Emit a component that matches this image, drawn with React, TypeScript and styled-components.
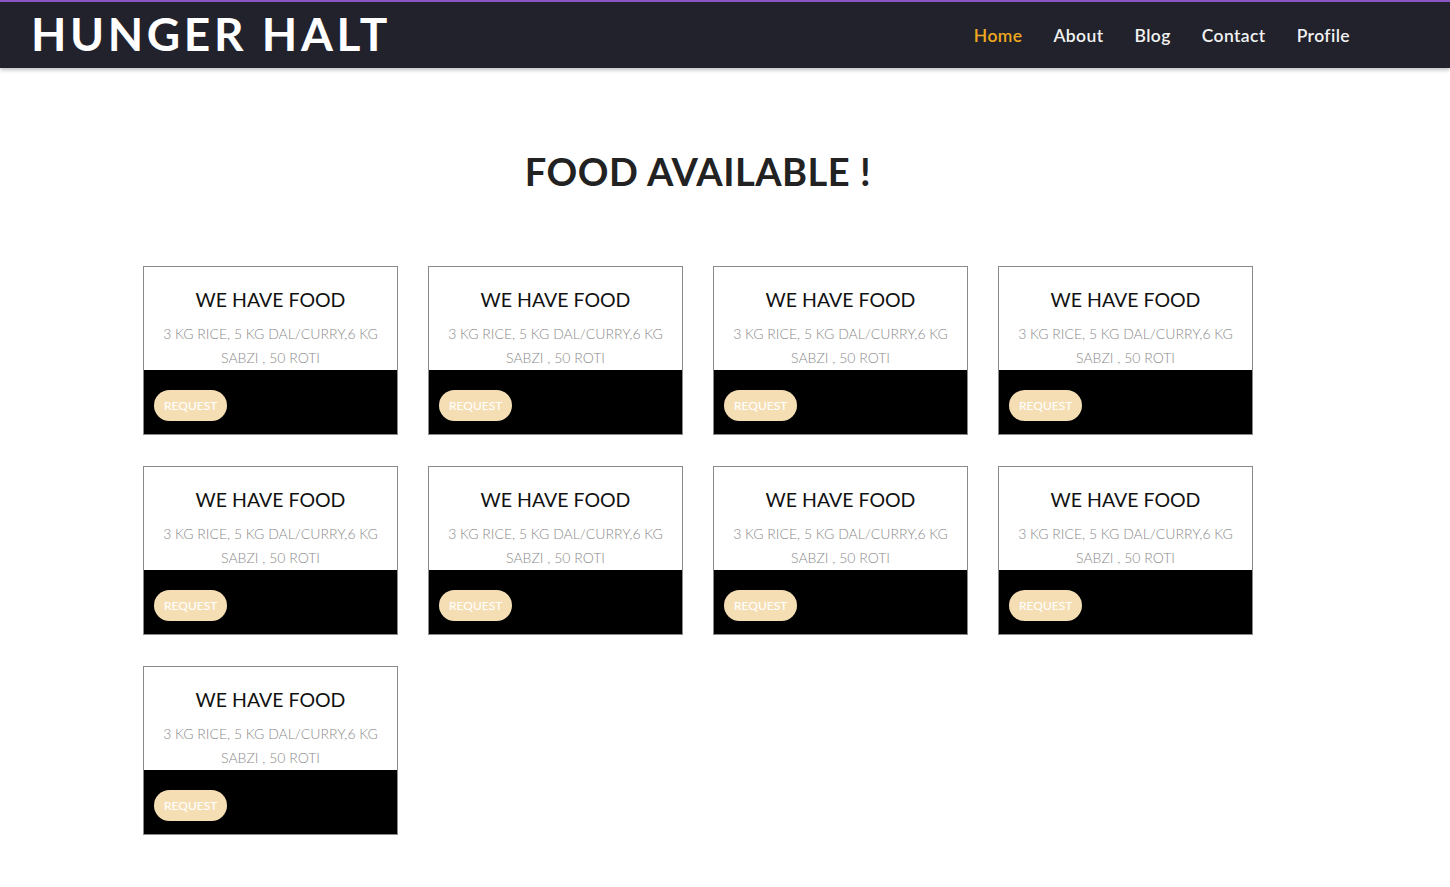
import React from "react";
import styled, { createGlobalStyle } from "styled-components";

const GlobalStyle = createGlobalStyle`
  body {
    margin: 0;
    background: #fff;
    font-family: "Lato", "Noto Sans", sans-serif;
  }
`;

const NavBar = styled.nav`
  height: 66px;
  background: #22222c;
  border-top: 2px solid #8a55c4;
  display: flex;
  align-items: center;
  justify-content: space-between;
  padding: 0 100px 0 31px;
  box-shadow: 0 2px 4px rgba(0, 0, 0, 0.25);
`;

const Logo = styled.div`
  color: #fff;
  font-size: 46px;
  font-weight: 700;
  letter-spacing: 3.6px;
  line-height: 1;
  margin-top: -2px;
`;

const Links = styled.ul`
  display: flex;
  gap: 31px;
  list-style: none;
  margin: 0;
  padding: 0;
`;

const NavLink = styled.li<{ $active?: boolean }>`
  color: ${(p) => (p.$active ? "#f0a920" : "#f2f2f2")};
  font-size: 17.5px;
  font-weight: 600;
  letter-spacing: 0.4px;
`;

const Main = styled.main`
  width: 1110px;
  margin: 0 auto;
  padding: 80px 54px 40px 0;
`;

const Title = styled.h1`
  margin: 0 0 72px;
  text-align: center;
  font-size: 38px;
  line-height: 46px;
  font-weight: 700;
  color: #222;
  letter-spacing: 0.5px;
`;

const Grid = styled.div`
  display: grid;
  grid-template-columns: repeat(4, 255px);
  column-gap: 30px;
  row-gap: 31px;
`;

const Card = styled.div`
  border: 1px solid #8a8a8a;
  display: flex;
  flex-direction: column;
  height: 169px;
  box-sizing: border-box;
`;

const CardTop = styled.div`
  background: #fff;
  height: 103px;
  text-align: center;
  padding-top: 21px;
  box-sizing: border-box;
`;

const CardTitle = styled.h3`
  margin: 0 0 10px;
  font-size: 19.5px;
  font-weight: 400;
  color: #111;
  line-height: 24px;
`;

const CardText = styled.p`
  margin: 0;
  font-size: 14px;
  font-weight: 300;
  color: #8a8a8a;
  line-height: 24px;
  padding: 0 8px;
`;

const CardBottom = styled.div`
  flex: 1;
  background: #000;
  display: flex;
  align-items: flex-start;
  padding: 20px 10px 0;
`;

const RequestButton = styled.button`
  background: #f5deb3;
  color: #fff;
  border: none;
  border-radius: 16px;
  height: 31px;
  padding: 0 10px;
  font-family: inherit;
  font-size: 12px;
  font-weight: 500;
  cursor: pointer;
`;

const items = Array.from({ length: 9 }, (_, i) => i);

export default function App() {
  return (
    <>
      <GlobalStyle />
      <NavBar>
        <Logo>HUNGER HALT</Logo>
        <Links>
          <NavLink $active>Home</NavLink>
          <NavLink>About</NavLink>
          <NavLink>Blog</NavLink>
          <NavLink>Contact</NavLink>
          <NavLink>Profile</NavLink>
        </Links>
      </NavBar>
      <Main>
        <Title>FOOD AVAILABLE !</Title>
        <Grid>
          {items.map((i) => (
            <Card key={i}>
              <CardTop>
                <CardTitle>WE HAVE FOOD</CardTitle>
                <CardText>3 KG RICE, 5 KG DAL/CURRY,6 KG SABZI , 50 ROTI</CardText>
              </CardTop>
              <CardBottom>
                <RequestButton>REQUEST</RequestButton>
              </CardBottom>
            </Card>
          ))}
        </Grid>
      </Main>
    </>
  );
}
